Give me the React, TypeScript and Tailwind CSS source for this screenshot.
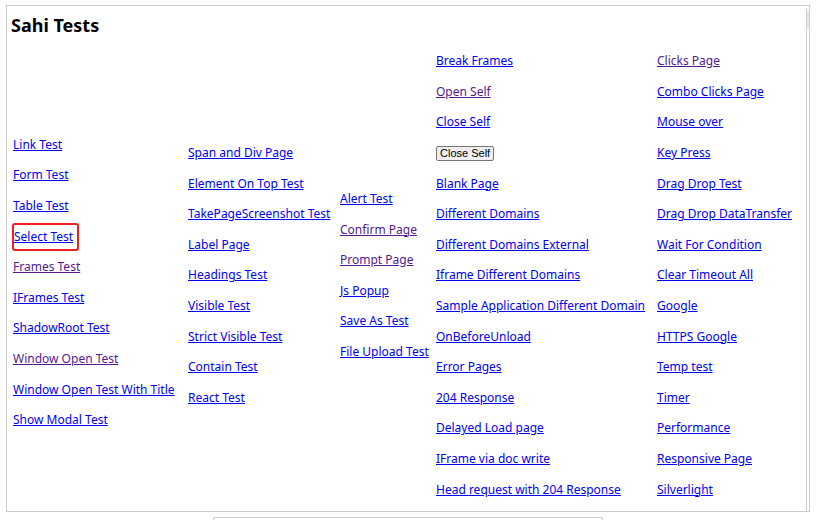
import React from 'react';

type Item = { label: string; visited?: boolean; button?: boolean; boxed?: boolean };

const col1: Item[] = [
  { label: 'Link Test' },
  { label: 'Form Test' },
  { label: 'Table Test' },
  { label: 'Select Test', boxed: true },
  { label: 'Frames Test', visited: true },
  { label: 'IFrames Test' },
  { label: 'ShadowRoot Test' },
  { label: 'Window Open Test', visited: true },
  { label: 'Window Open Test With Title' },
  { label: 'Show Modal Test' },
];

const col2: Item[] = [
  { label: 'Span and Div Page' },
  { label: 'Element On Top Test' },
  { label: 'TakePageScreenshot Test' },
  { label: 'Label Page' },
  { label: 'Headings Test' },
  { label: 'Visible Test' },
  { label: 'Strict Visible Test' },
  { label: 'Contain Test' },
  { label: 'React Test' },
];

const col3: Item[] = [
  { label: 'Alert Test' },
  { label: 'Confirm Page', visited: true },
  { label: 'Prompt Page', visited: true },
  { label: 'Js Popup' },
  { label: 'Save As Test' },
  { label: 'File Upload Test' },
];

const col4: Item[] = [
  { label: 'Break Frames' },
  { label: 'Open Self', visited: true },
  { label: 'Close Self' },
  { label: 'Close Self', button: true },
  { label: 'Blank Page' },
  { label: 'Different Domains' },
  { label: 'Different Domains External' },
  { label: 'Iframe Different Domains' },
  { label: 'Sample Application Different Domain' },
  { label: 'OnBeforeUnload' },
  { label: 'Error Pages' },
  { label: '204 Response' },
  { label: 'Delayed Load page' },
  { label: 'IFrame via doc write' },
  { label: 'Head request with 204 Response' },
];

const col5: Item[] = [
  { label: 'Clicks Page', visited: true },
  { label: 'Combo Clicks Page' },
  { label: 'Mouse over' },
  { label: 'Key Press' },
  { label: 'Drag Drop Test' },
  { label: 'Drag Drop DataTransfer' },
  { label: 'Wait For Condition' },
  { label: 'Clear Timeout All' },
  { label: 'Google' },
  { label: 'HTTPS Google' },
  { label: 'Temp test' },
  { label: 'Timer' },
  { label: 'Performance' },
  { label: 'Responsive Page' },
  { label: 'Silverlight' },
];

function Cell({ item }: { item: Item }) {
  if (item.button) {
    return (
      <div className="h-[30.6px] flex items-center">
        <button className="h-[15px] px-[3px] text-[11px] leading-none font-['Liberation_Sans',Arial,sans-serif] text-black bg-[#efefef] border border-[#767676] rounded-[2px]">
          {item.label}
        </button>
      </div>
    );
  }
  const link = (
    <a
      href="#"
      className={`underline whitespace-nowrap ${item.visited ? 'text-[#551a8b]' : 'text-[#0000ee]'}`}
    >
      {item.label}
    </a>
  );
  return (
    <div className="h-[30.6px] flex items-center">
      {item.boxed ? (
        <span className="-ml-[1px] pr-[4px] py-[3px] border-2 border-[#ee2222] rounded-[3px]">{link}</span>
      ) : (
        link
      )}
    </div>
  );
}

function Column({ items, className }: { items: Item[]; className: string }) {
  return (
    <div className={`flex flex-col ${className}`}>
      {items.map((it, i) => (
        <Cell key={i} item={it} />
      ))}
    </div>
  );
}

export default function App() {
  return (
    <div className="w-[817px] h-[520px] bg-white overflow-hidden pt-[5px] pl-[6px] font-['Noto_Sans','Open_Sans',sans-serif] text-[12px]">
      <div className="w-[804px] h-[507px] border border-[#cdcdcd] flex">
        <div className="flex-1 flex flex-col">
          <h1 className="pl-[4px] pt-[7px] text-[18px] leading-[24px] font-bold text-black">Sahi Tests</h1>
          <div className="flex items-center pl-[6px] mt-[9px]">
            <Column items={col1} className="w-[175px] pt-[14px]" />
            <Column items={col2} className="w-[152px]" />
            <Column items={col3} className="w-[96px]" />
            <Column items={col4} className="w-[221px]" />
            <Column items={col5} className="w-[140px]" />
          </div>
        </div>
        <div className="w-[3px] mt-[2px] border-l border-[#cdcdcd] flex flex-col">
          <div className="mt-[3px] h-[17px] bg-[#e4e8ee]" />
        </div>
      </div>
      <div className="ml-[207px] mt-[5px] w-[390px] h-[10px] border-t border-x border-[#cdcdcd]" />
    </div>
  );
}
